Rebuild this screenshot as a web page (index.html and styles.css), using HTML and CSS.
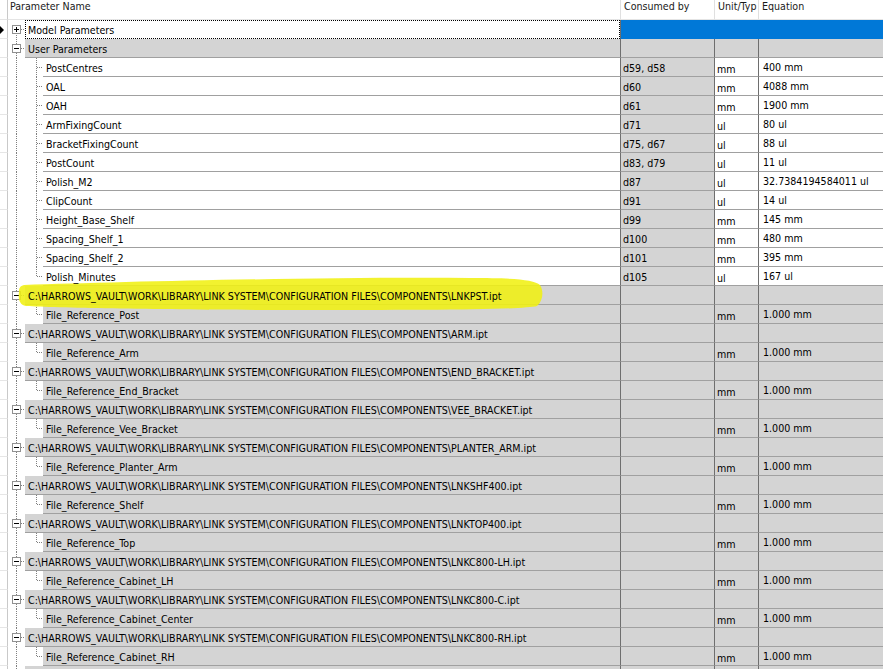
FILE: index.html
```html
<!DOCTYPE html>
<html>
<head>
<meta charset="utf-8">
<link rel="stylesheet" href="styles.css">
</head>
<body>
<div class="grid">
  <div class="row head">
    <div class="rh"></div>
    <div class="hn"><span class="t">Parameter Name</span></div>
    <div class="hc">Consumed by</div>
    <div class="hc">Unit/Typ</div>
    <div class="hc">Equation</div>
  </div>

  <div class="row model">
    <div class="rh"><span class="arrow"></span></div>
    <div class="name"><div class="gut top first"><span class="box plus"></span></div><div class="cell focus"><span class="t">Model Parameters</span></div></div>
    <div class="c2"></div><div class="c3"></div><div class="c4"></div>
  </div>

  <div class="row gray">
    <div class="rh"></div>
    <div class="name"><div class="gut top"><span class="box minus"></span></div><div class="cell"><span class="t">User Parameters</span></div></div>
    <div class="c2"></div><div class="c3"></div><div class="c4"></div>
  </div>

  <div class="row user"><div class="rh"></div><div class="name"><div class="gut child mid"></div><div class="cell"><span class="t">PostCentres</span></div></div><div class="c2"><span class="t">d59, d58</span></div><div class="c3"><span class="t">mm</span></div><div class="c4"><span class="t">400 mm</span></div></div>
  <div class="row user"><div class="rh"></div><div class="name"><div class="gut child mid"></div><div class="cell"><span class="t">OAL</span></div></div><div class="c2"><span class="t">d60</span></div><div class="c3"><span class="t">mm</span></div><div class="c4"><span class="t">4088 mm</span></div></div>
  <div class="row user"><div class="rh"></div><div class="name"><div class="gut child mid"></div><div class="cell"><span class="t">OAH</span></div></div><div class="c2"><span class="t">d61</span></div><div class="c3"><span class="t">mm</span></div><div class="c4"><span class="t">1900 mm</span></div></div>
  <div class="row user"><div class="rh"></div><div class="name"><div class="gut child mid"></div><div class="cell"><span class="t">ArmFixingCount</span></div></div><div class="c2"><span class="t">d71</span></div><div class="c3"><span class="t">ul</span></div><div class="c4"><span class="t">80 ul</span></div></div>
  <div class="row user"><div class="rh"></div><div class="name"><div class="gut child mid"></div><div class="cell"><span class="t">BracketFixingCount</span></div></div><div class="c2"><span class="t">d75, d67</span></div><div class="c3"><span class="t">ul</span></div><div class="c4"><span class="t">88 ul</span></div></div>
  <div class="row user"><div class="rh"></div><div class="name"><div class="gut child mid"></div><div class="cell"><span class="t">PostCount</span></div></div><div class="c2"><span class="t">d83, d79</span></div><div class="c3"><span class="t">ul</span></div><div class="c4"><span class="t">11 ul</span></div></div>
  <div class="row user"><div class="rh"></div><div class="name"><div class="gut child mid"></div><div class="cell"><span class="t">Polish_M2</span></div></div><div class="c2"><span class="t">d87</span></div><div class="c3"><span class="t">ul</span></div><div class="c4"><span class="t">32.7384194584011 ul</span></div></div>
  <div class="row user"><div class="rh"></div><div class="name"><div class="gut child mid"></div><div class="cell"><span class="t">ClipCount</span></div></div><div class="c2"><span class="t">d91</span></div><div class="c3"><span class="t">ul</span></div><div class="c4"><span class="t">14 ul</span></div></div>
  <div class="row user"><div class="rh"></div><div class="name"><div class="gut child mid"></div><div class="cell"><span class="t">Height_Base_Shelf</span></div></div><div class="c2"><span class="t">d99</span></div><div class="c3"><span class="t">mm</span></div><div class="c4"><span class="t">145 mm</span></div></div>
  <div class="row user"><div class="rh"></div><div class="name"><div class="gut child mid"></div><div class="cell"><span class="t">Spacing_Shelf_1</span></div></div><div class="c2"><span class="t">d100</span></div><div class="c3"><span class="t">mm</span></div><div class="c4"><span class="t">480 mm</span></div></div>
  <div class="row user"><div class="rh"></div><div class="name"><div class="gut child mid"></div><div class="cell"><span class="t">Spacing_Shelf_2</span></div></div><div class="c2"><span class="t">d101</span></div><div class="c3"><span class="t">mm</span></div><div class="c4"><span class="t">395 mm</span></div></div>
  <div class="row user"><div class="rh"></div><div class="name"><div class="gut child last"></div><div class="cell"><span class="t">Polish_Minutes</span></div></div><div class="c2"><span class="t">d105</span></div><div class="c3"><span class="t">ul</span></div><div class="c4"><span class="t">167 ul</span></div></div>

  <div class="row gray"><div class="rh"></div><div class="name"><div class="gut top"><span class="box minus"></span></div><div class="cell"><span class="t">C:\HARROWS_VAULT\WORK\LIBRARY\LINK SYSTEM\CONFIGURATION FILES\COMPONENTS\LNKPST.ipt</span></div></div><div class="c2"></div><div class="c3"></div><div class="c4"></div></div>
  <div class="row gray"><div class="rh"></div><div class="name"><div class="gut child last"></div><div class="cell"><span class="t">File_Reference_Post</span></div></div><div class="c2"></div><div class="c3"><span class="t">mm</span></div><div class="c4"><span class="t">1.000 mm</span></div></div>

  <div class="row gray"><div class="rh"></div><div class="name"><div class="gut top"><span class="box minus"></span></div><div class="cell"><span class="t">C:\HARROWS_VAULT\WORK\LIBRARY\LINK SYSTEM\CONFIGURATION FILES\COMPONENTS\ARM.ipt</span></div></div><div class="c2"></div><div class="c3"></div><div class="c4"></div></div>
  <div class="row gray"><div class="rh"></div><div class="name"><div class="gut child last"></div><div class="cell"><span class="t">File_Reference_Arm</span></div></div><div class="c2"></div><div class="c3"><span class="t">mm</span></div><div class="c4"><span class="t">1.000 mm</span></div></div>

  <div class="row gray"><div class="rh"></div><div class="name"><div class="gut top"><span class="box minus"></span></div><div class="cell"><span class="t">C:\HARROWS_VAULT\WORK\LIBRARY\LINK SYSTEM\CONFIGURATION FILES\COMPONENTS\END_BRACKET.ipt</span></div></div><div class="c2"></div><div class="c3"></div><div class="c4"></div></div>
  <div class="row gray"><div class="rh"></div><div class="name"><div class="gut child last"></div><div class="cell"><span class="t">File_Reference_End_Bracket</span></div></div><div class="c2"></div><div class="c3"><span class="t">mm</span></div><div class="c4"><span class="t">1.000 mm</span></div></div>

  <div class="row gray"><div class="rh"></div><div class="name"><div class="gut top"><span class="box minus"></span></div><div class="cell"><span class="t">C:\HARROWS_VAULT\WORK\LIBRARY\LINK SYSTEM\CONFIGURATION FILES\COMPONENTS\VEE_BRACKET.ipt</span></div></div><div class="c2"></div><div class="c3"></div><div class="c4"></div></div>
  <div class="row gray"><div class="rh"></div><div class="name"><div class="gut child last"></div><div class="cell"><span class="t">File_Reference_Vee_Bracket</span></div></div><div class="c2"></div><div class="c3"><span class="t">mm</span></div><div class="c4"><span class="t">1.000 mm</span></div></div>

  <div class="row gray"><div class="rh"></div><div class="name"><div class="gut top"><span class="box minus"></span></div><div class="cell"><span class="t">C:\HARROWS_VAULT\WORK\LIBRARY\LINK SYSTEM\CONFIGURATION FILES\COMPONENTS\PLANTER_ARM.ipt</span></div></div><div class="c2"></div><div class="c3"></div><div class="c4"></div></div>
  <div class="row gray"><div class="rh"></div><div class="name"><div class="gut child last"></div><div class="cell"><span class="t">File_Reference_Planter_Arm</span></div></div><div class="c2"></div><div class="c3"><span class="t">mm</span></div><div class="c4"><span class="t">1.000 mm</span></div></div>

  <div class="row gray"><div class="rh"></div><div class="name"><div class="gut top"><span class="box minus"></span></div><div class="cell"><span class="t">C:\HARROWS_VAULT\WORK\LIBRARY\LINK SYSTEM\CONFIGURATION FILES\COMPONENTS\LNKSHF400.ipt</span></div></div><div class="c2"></div><div class="c3"></div><div class="c4"></div></div>
  <div class="row gray"><div class="rh"></div><div class="name"><div class="gut child last"></div><div class="cell"><span class="t">File_Reference_Shelf</span></div></div><div class="c2"></div><div class="c3"><span class="t">mm</span></div><div class="c4"><span class="t">1.000 mm</span></div></div>

  <div class="row gray"><div class="rh"></div><div class="name"><div class="gut top"><span class="box minus"></span></div><div class="cell"><span class="t">C:\HARROWS_VAULT\WORK\LIBRARY\LINK SYSTEM\CONFIGURATION FILES\COMPONENTS\LNKTOP400.ipt</span></div></div><div class="c2"></div><div class="c3"></div><div class="c4"></div></div>
  <div class="row gray"><div class="rh"></div><div class="name"><div class="gut child last"></div><div class="cell"><span class="t">File_Reference_Top</span></div></div><div class="c2"></div><div class="c3"><span class="t">mm</span></div><div class="c4"><span class="t">1.000 mm</span></div></div>

  <div class="row gray"><div class="rh"></div><div class="name"><div class="gut top"><span class="box minus"></span></div><div class="cell"><span class="t">C:\HARROWS_VAULT\WORK\LIBRARY\LINK SYSTEM\CONFIGURATION FILES\COMPONENTS\LNKC800-LH.ipt</span></div></div><div class="c2"></div><div class="c3"></div><div class="c4"></div></div>
  <div class="row gray"><div class="rh"></div><div class="name"><div class="gut child last"></div><div class="cell"><span class="t">File_Reference_Cabinet_LH</span></div></div><div class="c2"></div><div class="c3"><span class="t">mm</span></div><div class="c4"><span class="t">1.000 mm</span></div></div>

  <div class="row gray"><div class="rh"></div><div class="name"><div class="gut top"><span class="box minus"></span></div><div class="cell"><span class="t">C:\HARROWS_VAULT\WORK\LIBRARY\LINK SYSTEM\CONFIGURATION FILES\COMPONENTS\LNKC800-C.ipt</span></div></div><div class="c2"></div><div class="c3"></div><div class="c4"></div></div>
  <div class="row gray"><div class="rh"></div><div class="name"><div class="gut child last"></div><div class="cell"><span class="t">File_Reference_Cabinet_Center</span></div></div><div class="c2"></div><div class="c3"><span class="t">mm</span></div><div class="c4"><span class="t">1.000 mm</span></div></div>

  <div class="row gray"><div class="rh"></div><div class="name"><div class="gut top"><span class="box minus"></span></div><div class="cell"><span class="t">C:\HARROWS_VAULT\WORK\LIBRARY\LINK SYSTEM\CONFIGURATION FILES\COMPONENTS\LNKC800-RH.ipt</span></div></div><div class="c2"></div><div class="c3"></div><div class="c4"></div></div>
  <div class="row gray"><div class="rh"></div><div class="name"><div class="gut child last"></div><div class="cell"><span class="t">File_Reference_Cabinet_RH</span></div></div><div class="c2"></div><div class="c3"><span class="t">mm</span></div><div class="c4"><span class="t">1.000 mm</span></div></div>

  <div class="row gray"><div class="rh"></div><div class="name"><div class="gut top"><span class="box minus"></span></div><div class="cell"></div></div><div class="c2"></div><div class="c3"></div><div class="c4"></div></div>

  <svg class="hl" width="883" height="669" viewBox="0 0 883 669" aria-hidden="true">
    <path d="M24 285 C 120 282, 300 277, 470 278 C 510 278, 534 279, 540 285 C 544 291, 543 301, 537 306 C 520 310, 420 310, 300 310 C 180 310, 60 308, 26 306 C 19 305, 18 298, 19 292 C 19 288, 20 286, 24 285 Z" fill="rgba(240,240,18,0.88)"/>
  </svg>
</div>
</body>
</html>
```

FILE: styles.css
```css
html, body {
  margin: 0;
  padding: 0;
  background: #ffffff;
  overflow: hidden;
}

.grid {
  position: relative;
  width: 883px;
  height: 669px;
  overflow: hidden;
  font-family: "DejaVu Sans Condensed", "DejaVu Sans", "Liberation Sans", sans-serif;
  font-stretch: condensed;
  font-size: 10.6px;
  color: #000;
}

.row {
  display: grid;
  grid-template-columns: 8px 612px 94px 44px 125px;
  height: 19px;
}

.t {
  position: relative;
  z-index: 2;
  white-space: nowrap;
}

/* header */
.head {
  height: 20px;
  background: #ffffff;
}
.head .rh {
  border-bottom: 1px solid #e4e4e4;
}
.hn, .hc {
  box-sizing: border-box;
  height: 20px;
  border-bottom: 1px solid #e4e4e4;
  line-height: 12px;
  color: #1a1a1a;
  overflow: hidden;
  white-space: nowrap;
}
.hn {
  padding-left: 2px;
}
.hc {
  border-left: 1px solid #e0e0e0;
  padding-left: 3px;
}

/* row header column */
.rh {
  box-sizing: border-box;
  border-right: 1px solid #c9c9c9;
  border-bottom: 1px solid #e6e6e6;
  position: relative;
}
.arrow {
  position: absolute;
  left: 0;
  top: 6px;
  width: 0;
  height: 0;
  border-top: 4px solid transparent;
  border-bottom: 4px solid transparent;
  border-left: 4px solid #000;
}

/* name column */
.name {
  display: flex;
  min-width: 0;
}
.gut {
  flex: none;
  height: 19px;
  background-repeat: no-repeat;
}
.gut.top {
  width: 17px;
  background-image:
    repeating-linear-gradient(to bottom, #808080 0 1px, transparent 1px 2px),
    repeating-linear-gradient(to right, #808080 0 1px, transparent 1px 2px);
  background-size: 1px 19px, 4px 1px;
  background-position: 8px 0, 13px 9px;
}
.gut.top.first {
  background-size: 1px 10px, 4px 1px;
  background-position: 8px 9px, 13px 9px;
}
.gut.child {
  width: 35px;
  background-image:
    repeating-linear-gradient(to bottom, #808080 0 1px, transparent 1px 2px),
    repeating-linear-gradient(to bottom, #808080 0 1px, transparent 1px 2px),
    repeating-linear-gradient(to right, #808080 0 1px, transparent 1px 2px);
  background-size: 1px 19px, 1px 19px, 6px 1px;
  background-position: 8px 0, 28px 0, 29px 9px;
}
.gut.child.last {
  background-size: 1px 19px, 1px 10px, 6px 1px;
}

.box {
  display: block;
  box-sizing: border-box;
  width: 9px;
  height: 9px;
  margin: 5px 0 0 4px;
  border: 1px solid #919191;
  background-color: #ffffff;
  background-repeat: no-repeat;
}
.box.minus {
  background-image: linear-gradient(#000, #000);
  background-size: 5px 1px;
  background-position: 1px 3px;
}
.box.plus {
  background-image: linear-gradient(#000, #000), linear-gradient(#000, #000);
  background-size: 5px 1px, 1px 5px;
  background-position: 1px 3px, 3px 1px;
}

.cell {
  flex: 1;
  min-width: 0;
  box-sizing: border-box;
  height: 19px;
  border-bottom: 1px solid #a0a0a0;
  padding-left: 3px;
  line-height: 20px;
  overflow: hidden;
  white-space: nowrap;
}

.c2, .c3, .c4 {
  box-sizing: border-box;
  height: 19px;
  border-left: 1px solid #6e6e6e;
  border-bottom: 1px solid #a0a0a0;
  line-height: 20px;
  overflow: hidden;
  white-space: nowrap;
}
.c2 { padding-left: 2px; }
.c3 { padding-left: 2px; padding-top: 2px; line-height: 18px; }
.c4 { padding-left: 4px; line-height: 18px; }

/* row variants */
.model .cell {
  background: #ffffff;
  border: 1px dotted #000;
  line-height: 18px;
  padding-left: 2px;
}
.model .c2, .model .c3, .model .c4 {
  background: #0078d7;
  border-color: #0078d7;
}
.model .c2 {
  border-left-color: #6e6e6e;
}

.gray .cell, .gray .c2, .gray .c3, .gray .c4 {
  background: #d4d4d4;
}

.user .cell { background: #ffffff; }
.user .c2 { background: #d4d4d4; }
.user .c3, .user .c4 { background: #ffffff; }

/* highlighter mark */
.hl {
  position: absolute;
  left: 0;
  top: 0;
  z-index: 1;
  pointer-events: none;
}
```
